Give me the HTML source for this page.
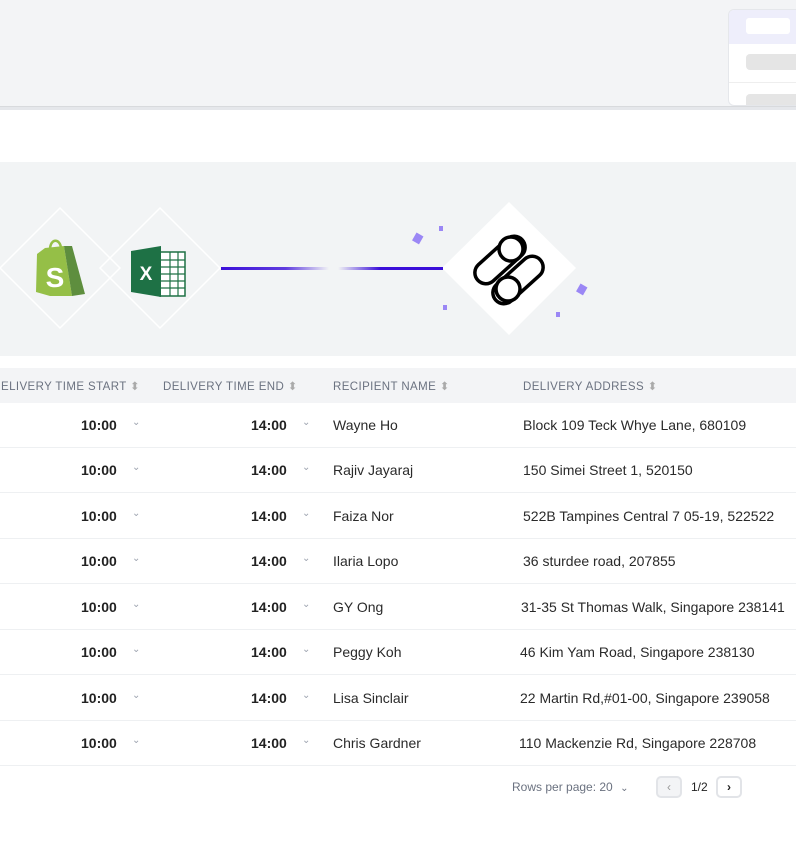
<!DOCTYPE html>
<html><head><meta charset="utf-8"><style>
*{margin:0;padding:0;box-sizing:border-box}
body{width:796px;height:842px;overflow:hidden;background:#fff;font-family:"Liberation Sans",sans-serif;position:relative}
.abs{position:absolute}
.row{position:absolute;left:0;width:796px;height:45px;border-bottom:1px solid #eef0f2;font-size:14px;color:#2a2a2a}
.row span{position:absolute;top:14px}
.t{font-weight:bold;color:#222}
.hd{position:absolute;top:379px;font-size:11.5px;letter-spacing:.4px;color:#6b7280}
.car{color:#9ca3af;font-size:10px;position:absolute;top:15px}
</style></head><body>
<div class="abs" style="left:0;top:0;width:796px;height:106px;background:#f3f4f6"></div>
<div class="abs" style="left:728px;top:9px;width:80px;height:97px;border:1px solid #e5e7eb;border-radius:6px;background:#fff;overflow:hidden">
 <div style="height:34px;background:#eeeefb"></div>
 <div class="abs" style="left:17px;top:8px;width:44px;height:16px;background:#fff;border-radius:3px"></div>
 <div class="abs" style="left:17px;top:44px;width:60px;height:16px;background:#e5e5e5;border-radius:4px"></div>
 <div class="abs" style="left:0;top:72px;width:80px;height:1px;background:#eee"></div>
 <div class="abs" style="left:17px;top:84px;width:60px;height:16px;background:#e5e5e5;border-radius:4px"></div>
</div>
<div class="abs" style="left:0;top:106px;width:796px;height:4px;background:#e5e7eb;border-top:1px solid #d8dadd"></div>
<div class="abs" style="left:0;top:162px;width:796px;height:194px;background:#f2f4f5"></div>
<svg class="abs" style="left:0;top:200px" width="796" height="140">
 <g fill="none" stroke="#fff" stroke-width="1.5">
  <polygon points="60,8 120,68 60,128 0,68"/>
  <polygon points="160,8 220,68 160,128 100,68"/>
 </g>
 <polygon points="509,2 576,68 509,135 442,68" fill="#fff"/>
 <defs><linearGradient id="g1" x1="0" x2="1"><stop offset="0" stop-color="#3b0fd9"/><stop offset=".6" stop-color="#3b0fd9" stop-opacity=".8"/><stop offset="1" stop-color="#3b0fd9" stop-opacity="0"/></linearGradient>
 <linearGradient id="g2" x1="0" x2="1"><stop offset="0" stop-color="#3b0fd9" stop-opacity="0"/><stop offset=".4" stop-color="#3b0fd9"/></linearGradient></defs>
 <rect x="221" y="67" width="108" height="3" fill="url(#g1)"/>
 <rect x="338" y="67" width="105" height="3" fill="url(#g2)"/>
 <!-- shopify -->
 <path d="M37,54 L45,48 L64,46 L72,96 L50,96 L36,92 Z" fill="#95bf47"/>
 <path d="M64,46 L72,46 L85,94 L72,96 Z" fill="#5e8e3e"/>
 <path d="M50,50 C50,38 60,38 61,48" stroke="#95bf47" stroke-width="2.5" fill="none"/>
 <text x="55" y="87" font-size="28" font-weight="bold" fill="#fff" text-anchor="middle" font-family="Liberation Sans">S</text>
 <!-- excel -->
 <rect x="160" y="52" width="25" height="44" fill="#fff" stroke="#1e7145" stroke-width="1.5"/>
 <path d="M160,60h25M160,67h25M160,74h25M160,81h25M160,88h25M170,52v44M178,52v44" stroke="#1e7145" stroke-width="1.2"/>
 <path d="M131,51 L161,46 L161,97 L131,92 Z" fill="#1e7145"/>
 <text x="146" y="80" font-size="19" font-weight="bold" fill="#fff" text-anchor="middle" font-family="Liberation Sans">X</text>
 <!-- logo -->
 <g fill="none" stroke="#000" stroke-width="3.5">
  <rect x="470" y="49" width="60" height="22" rx="11" transform="rotate(-42 500 60)"/>
  <rect x="488" y="69" width="60" height="22" rx="11" transform="rotate(-42 518 80)"/>
  <circle cx="511" cy="49" r="12" fill="#fff"/>
  <circle cx="508" cy="89" r="12" fill="#fff"/>
 </g>
 <g fill="#9b87f5">
  <rect x="414" y="34" width="8" height="9" transform="rotate(30 418 38)"/>
  <rect x="439" y="26" width="4" height="5"/>
  <rect x="443" y="105" width="4" height="5"/>
  <rect x="578" y="85" width="8" height="9" transform="rotate(30 582 89)"/>
  <rect x="556" y="112" width="4" height="5"/>
 </g>
</svg>
<div class="abs" style="left:0;top:368px;width:796px;height:35px;background:#f3f4f6"></div>
<div class="hd" style="left:1px">ELIVERY TIME START <span style="color:#aaa">⬍</span></div>
<div class="hd" style="left:163px">DELIVERY TIME END <span style="color:#aaa">⬍</span></div>
<div class="hd" style="left:333px">RECIPIENT NAME <span style="color:#aaa">⬍</span></div>
<div class="hd" style="left:523px">DELIVERY ADDRESS <span style="color:#aaa">⬍</span></div>

<div class="row" style="top:403px"><span class="t" style="left:81px">10:00</span><span class="car" style="left:132px">⌄</span><span class="t" style="left:251px">14:00</span><span class="car" style="left:302px">⌄</span><span style="left:333px">Wayne Ho</span><span style="left:523px">Block 109 Teck Whye Lane, 680109</span></div>
<div class="row" style="top:448px"><span class="t" style="left:81px">10:00</span><span class="car" style="left:132px">⌄</span><span class="t" style="left:251px">14:00</span><span class="car" style="left:302px">⌄</span><span style="left:333px">Rajiv Jayaraj</span><span style="left:523px">150 Simei Street 1, 520150</span></div>
<div class="row" style="top:494px"><span class="t" style="left:81px">10:00</span><span class="car" style="left:132px">⌄</span><span class="t" style="left:251px">14:00</span><span class="car" style="left:302px">⌄</span><span style="left:333px">Faiza Nor</span><span style="left:523px">522B Tampines Central 7 05-19, 522522</span></div>
<div class="row" style="top:539px"><span class="t" style="left:81px">10:00</span><span class="car" style="left:132px">⌄</span><span class="t" style="left:251px">14:00</span><span class="car" style="left:302px">⌄</span><span style="left:333px">Ilaria Lopo</span><span style="left:523px">36 sturdee road, 207855</span></div>
<div class="row" style="top:585px"><span class="t" style="left:81px">10:00</span><span class="car" style="left:132px">⌄</span><span class="t" style="left:251px">14:00</span><span class="car" style="left:302px">⌄</span><span style="left:333px">GY Ong</span><span style="left:521px">31-35 St Thomas Walk, Singapore 238141</span></div>
<div class="row" style="top:630px"><span class="t" style="left:81px">10:00</span><span class="car" style="left:132px">⌄</span><span class="t" style="left:251px">14:00</span><span class="car" style="left:302px">⌄</span><span style="left:333px">Peggy Koh</span><span style="left:520px">46 Kim Yam Road, Singapore 238130</span></div>
<div class="row" style="top:676px"><span class="t" style="left:81px">10:00</span><span class="car" style="left:132px">⌄</span><span class="t" style="left:251px">14:00</span><span class="car" style="left:302px">⌄</span><span style="left:333px">Lisa Sinclair</span><span style="left:520px">22 Martin Rd,#01-00, Singapore 239058</span></div>
<div class="row" style="top:721px"><span class="t" style="left:81px">10:00</span><span class="car" style="left:132px">⌄</span><span class="t" style="left:251px">14:00</span><span class="car" style="left:302px">⌄</span><span style="left:333px">Chris Gardner</span><span style="left:519px">110 Mackenzie Rd, Singapore 228708</span></div>

<div class="abs" style="left:512px;top:780px;font-size:12px;color:#6b7280">Rows per page: 20 <span style="font-size:10px;margin-left:4px">⌄</span></div>
<div class="abs" style="left:656px;top:776px;width:26px;height:22px;border:2px solid #e2e4e8;border-radius:5px;background:#f3f4f6;color:#999;font-size:12px;text-align:center;line-height:18px">‹</div>
<div class="abs" style="left:691px;top:780px;font-size:12px;color:#222">1/2</div>
<div class="abs" style="left:716px;top:776px;width:26px;height:22px;border:2px solid #e2e4e8;border-radius:5px;background:#fff;color:#222;font-size:12px;font-weight:bold;text-align:center;line-height:18px">›</div>
</body></html>
